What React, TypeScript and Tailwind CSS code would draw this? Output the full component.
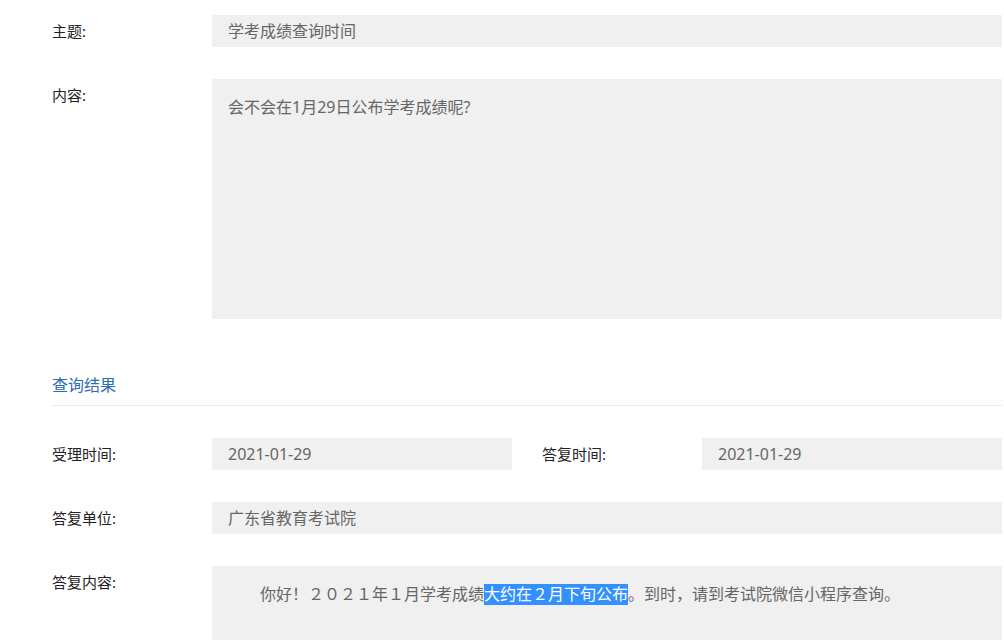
const font = { fontFamily: '"Noto Sans", "Noto Sans CJK SC", sans-serif' };

function Label({ children }: { children: React.ReactNode }) {
  return (
    <div className="w-[160px] shrink-0 text-[15px] leading-[32px] text-[#222]">
      {children}
    </div>
  );
}

function Field({ children }: { children: React.ReactNode }) {
  return (
    <div className="flex-1 h-8 bg-[#f0f0f0] px-4 text-base leading-[32px] text-[#666]">
      {children}
    </div>
  );
}

export default function App() {
  return (
    <div className="min-h-screen bg-white pl-[52px] pr-[2px] pt-[15px]" style={font}>
      {/* 提问 */}
      <div className="flex mb-8">
        <Label>主题:</Label>
        <Field>学考成绩查询时间</Field>
      </div>

      <div className="flex">
        <Label>内容:</Label>
        <div className="flex-1 h-[240px] bg-[#f0f0f0] px-4 py-4 text-base leading-6 text-[#666]">
          会不会在1月29日公布学考成绩呢?
        </div>
      </div>

      {/* 查询结果 */}
      <div className="mt-[54px] mb-8 border-b border-[#ececec] pb-2 text-base leading-6 text-[#2d6cb3]">
        查询结果
      </div>

      <div className="flex mb-8">
        <div className="flex w-[460px]">
          <Label>受理时间:</Label>
          <Field>2021-01-29</Field>
        </div>
        <div className="flex w-[460px] ml-[30px]">
          <Label>答复时间:</Label>
          <Field>2021-01-29</Field>
        </div>
      </div>

      <div className="flex mb-8">
        <Label>答复单位:</Label>
        <Field>广东省教育考试院</Field>
      </div>

      <div className="flex">
        <Label>答复内容:</Label>
        <div className="flex-1 h-[120px] bg-[#f0f0f0] px-4 py-4 text-base leading-6 text-[#666]">
          <p className="indent-8">
            你好！２０２１年１月学考成绩
            <span className="inline-block indent-0 bg-[#3390ff] text-white leading-[21px]">
              大约在２月下旬公布
            </span>
            。到时，请到考试院微信小程序查询。
          </p>
        </div>
      </div>
    </div>
  );
}
